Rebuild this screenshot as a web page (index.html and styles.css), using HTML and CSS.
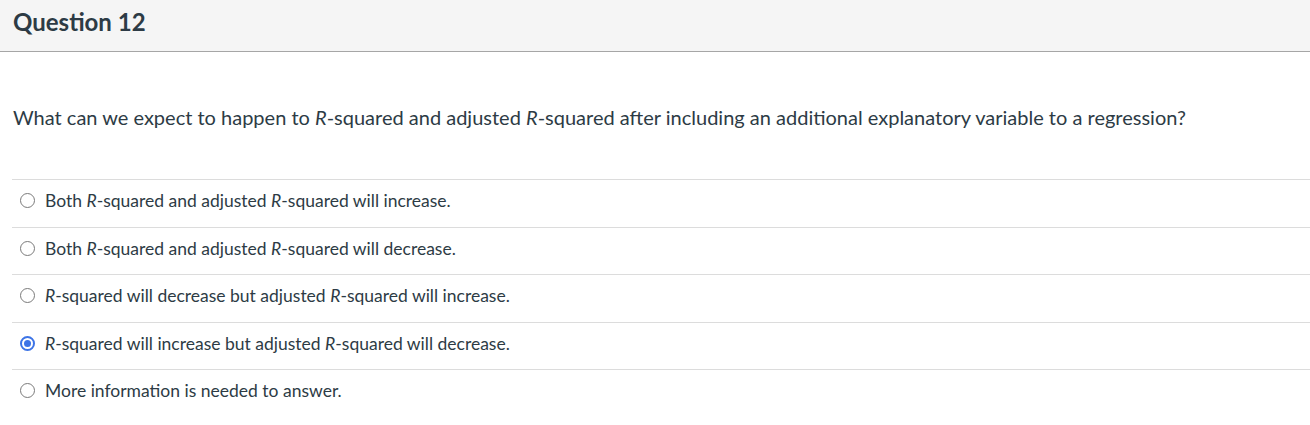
FILE: index.html
```html
<!DOCTYPE html>
<html>
<head>
<meta charset="utf-8">
<link rel="stylesheet" href="styles.css">
</head>
<body>
<div class="question">
  <div class="header"><h2 class="title">Question 12</h2></div>
  <div class="content">
    <p class="text">What can we expect to happen to <i>R</i>-squared and adjusted <i>R</i>-squared after including an additional explanatory variable to a regression?</p>
    <div class="answers">
      <div class="answer"><span class="radio"></span><span class="label">Both <i>R</i>-squared and adjusted <i>R</i>-squared will increase.</span></div>
      <div class="answer"><span class="radio"></span><span class="label">Both <i>R</i>-squared and adjusted <i>R</i>-squared will decrease.</span></div>
      <div class="answer"><span class="radio"></span><span class="label"><i>R</i>-squared will decrease but adjusted <i>R</i>-squared will increase.</span></div>
      <div class="answer"><span class="radio checked"></span><span class="label"><i>R</i>-squared will increase but adjusted <i>R</i>-squared will decrease.</span></div>
      <div class="answer"><span class="radio"></span><span class="label">More information is needed to answer.</span></div>
    </div>
  </div>
</div>
</body>
</html>
```
FILE: styles.css
```css
html, body {
  margin: 0;
  padding: 0;
  background: #fff;
}
body {
  font-family: Lato, "Open Sans", sans-serif;
  color: #2d3b45;
}
.header {
  height: 51px;
  background: #f5f5f5;
  border-bottom: 1px solid #a6a6a6;
  display: flex;
  align-items: center;
  padding: 0 13px;
  box-sizing: content-box;
}
.title {
  margin: 0;
  font-size: 24px;
  font-weight: 700;
  margin-top: -8px;
}
.content {
  padding-left: 12px;
}
.text {
  margin: 0;
  padding-top: 52px;
  padding-left: 1px;
  font-size: 20px;
  line-height: 26px;
  height: 75px;
  box-sizing: content-box;
}
.answers {
  display: flex;
  flex-direction: column;
}
.answer {
  height: 47.5px;
  box-sizing: border-box;
  border-top: 1px solid #dcdcdc;
  display: flex;
  align-items: center;
  padding-bottom: 5px;
  font-size: 17.5px;
}
.radio {
  width: 13px;
  height: 13px;
  border: 1px solid #7a7a7a;
  border-radius: 50%;
  margin-left: 8px;
  margin-right: 10px;
  background: #fff;
  flex: none;
  position: relative;
}
.radio.checked {
  border: 2px solid #3d74e6;
  width: 11px;
  height: 11px;
}
.radio.checked::after {
  content: "";
  position: absolute;
  left: 2px;
  top: 2px;
  width: 7px;
  height: 7px;
  border-radius: 50%;
  background: #3d74e6;
}
```
